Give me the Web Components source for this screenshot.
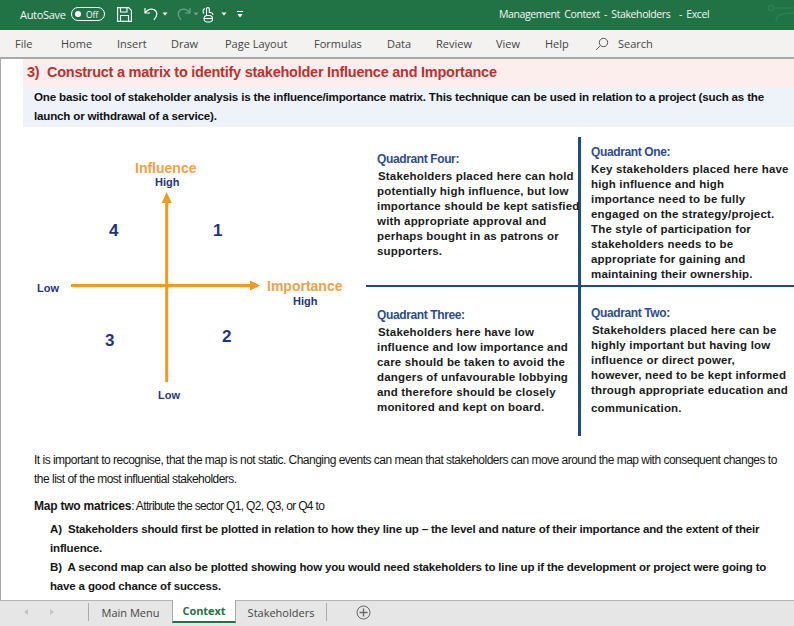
<!DOCTYPE html>
<html><head><meta charset="utf-8"><style>
html,body{margin:0;padding:0;background:#fff;overflow:hidden}
body{width:794px;height:626px;font-family:"Liberation Sans",Arial,sans-serif}
xl-window{width:794px;height:626px}
</style></head><body>
<xl-window>
  <xl-titlebar></xl-titlebar>
  <xl-menu></xl-menu>
  <xl-sheet>
    <xl-heading>3)&nbsp; Construct a matrix to identify stakeholder Influence and Importance</xl-heading>
    <xl-intro>One basic tool of stakeholder analysis is the influence/importance matrix. This technique can be used in relation to a project (such as the<br>launch or withdrawal of a service).</xl-intro>
    <xl-matrix>
      <xl-diagram slot="diagram"></xl-diagram>
      <xl-quad style="--pt:14px;--pl:11px;--br:3px;--bb:2px" title-text="Quadrant Four:"><span style="padding-left:1px">Stakeholders</span> placed here can hold<br>potentially high influence, but low<br>importance should be kept satisfied<br>with appropriate approval and<br>perhaps bought in as patrons or<br>supporters.</xl-quad>
      <xl-quad style="--pt:7px;--pl:10px;--bb:2px" title-text="Quadrant One:">Key stakeholders placed here have<br>high influence and high<br>importance need to be fully<br>engaged on the strategy/project.<br>The style of participation for<br>stakeholders needs to be<br>appropriate for gaining and<br>maintaining their ownership.</xl-quad>
      <xl-quad style="--pt:20px;--pl:11px;--br:3px" title-text="Quadrant Three:"><span style="padding-left:1px">Stakeholders</span> here have low<br>influence and low importance and<br>care should be taken to avoid the<br>dangers of unfavourable lobbying<br>and therefore should be closely<br>monitored and kept on board.</xl-quad>
      <xl-quad style="--pt:18px;--pl:10px" title-text="Quadrant Two:"><span style="padding-left:1px">Stakeholders</span> placed here can be<br>highly important but having low<br>influence or direct power,<br>however, need to be kept informed<br>through appropriate education and<br><span style="display:inline-block;margin-top:3px">communication.</span></xl-quad>
    </xl-matrix>
    <xl-notes></xl-notes>
  </xl-sheet>
  <xl-tabs></xl-tabs>
</xl-window>
<script>
function def(name, html){
  customElements.define(name, class extends HTMLElement{
    constructor(){super();const r=this.attachShadow({mode:'open'});r.innerHTML=typeof html==='function'?html(this):html;}
  });
}
def('xl-window',`<style>:host{display:flex;flex-direction:column;overflow:hidden;background:#fff}</style><slot></slot>`);
def('xl-titlebar',`<style>
:host{display:flex;align-items:center;height:30px;background:#217346;color:#fff;font:11px "Open Sans","Liberation Sans",sans-serif;flex:none;overflow:hidden;padding-bottom:2px;box-sizing:border-box}
.left{display:flex;align-items:center;width:499px;flex:none}
.auto{margin-left:20px;width:47px;color:#f4f8f5;letter-spacing:-.3px}
.tog{margin-left:4px;height:12px;border:1px solid #fff;border-radius:7px;display:flex;align-items:center;font-size:8.5px;gap:5px;padding-left:3px;box-sizing:content-box;width:29px}
.tog i{width:6px;height:6px;background:#fff;border-radius:50%}
svg{display:block;flex:none}
.title{font-size:10.5px;letter-spacing:-.4px;word-spacing:2px;white-space:pre;color:#f3f8f5}
.wm{margin-left:auto;margin-right:0}
</style>
<div class="left"><span class="auto">AutoSave</span><span class="tog"><i></i>Off</span>
<svg style="margin-left:12px" width="15" height="15" viewBox="0 0 15 15" fill="none" stroke="#fff" stroke-width="1.1"><path d="M.6.6h11l2.800 2.800v11H.6z"/><path d="M3.500.6v4.400h6.500V.6M3.500 14.400V8.500h8v5.900"/></svg>
<svg style="margin-left:12px" width="16" height="15" viewBox="0 0 16 15" fill="none" stroke="#fff" stroke-width="1.2"><path d="M1 1v5h5M1.300 5.800c2-3.600 6-4.600 9-3 3.400 2 3.400 6.500-.5 10"/></svg>
<svg style="margin-left:2px" width="6" height="4" viewBox="0 0 6 4"><path d="M.5.500h5L3 3.500z" fill="#fff"/></svg>
<svg style="margin-left:7px;opacity:.35" width="16" height="15" viewBox="0 0 16 15" fill="none" stroke="#fff" stroke-width="1.2"><path d="M15 1v5h-5M14.700 5.800c-2-3.600-6-4.600-9-3-3.400 2-3.400 6.500.5 10"/></svg>
<svg style="margin-left:2px;opacity:.35" width="6" height="4" viewBox="0 0 6 4"><path d="M.5.500h5L3 3.500z" fill="#fff"/></svg>
<svg style="margin-left:3px" width="12" height="17" viewBox="0 0 12 17" fill="none" stroke="#fff" stroke-width="1.1"><path d="M4.500 9V3a1.400 1.400 0 0 1 2.800 0v3.500h1.200a2.400 2.400 0 0 1 2.400 2.400M2 7.500a3 3 0 0 1 1-5"/><rect x="2" y="9.500" width="8.500" height="6.500" rx="3.200"/><path d="M2 12.500h8.500"/></svg>
<svg style="margin-left:7px" width="6" height="4" viewBox="0 0 6 4"><path d="M.5.500h5L3 3.500z" fill="#fff"/></svg>
<svg style="margin-left:10px" width="6" height="7" viewBox="0 0 6 7" fill="#fff"><path d="M0 0h6v1H0zM.5 3h5L3 6.500z"/></svg></div>
<span class="title">Management Context - Stakeholders  - Excel</span>
<svg class="wm" width="26" height="20" viewBox="0 0 26 20" fill="none" stroke="#2b7f50" stroke-width="1.6"><circle cx="3" cy="4" r="2.500"/><path d="M6 4h20M8 18c0-7 5-9 18-9"/></svg>`);
def('xl-menu',`<style>
:host{display:flex;align-items:center;height:29px;flex:none;background:#f3f2f1;color:#444;font:11px "Open Sans","Liberation Sans",sans-serif;border-bottom:2px solid #a9a9a9;box-sizing:border-box;padding-left:15px}
span{display:block;flex:none;white-space:nowrap}
svg{display:block;flex:none}
</style>
<span style="width:46px">File</span><span style="width:56px">Home</span><span style="width:54px">Insert</span><span style="width:54px">Draw</span><span style="width:89px">Page Layout</span><span style="width:73px">Formulas</span><span style="width:49px">Data</span><span style="width:60px">Review</span><span style="width:49px">View</span><span style="width:50px">Help</span>
<svg width="14" height="14" viewBox="0 0 14 14" fill="none" stroke="#555" stroke-width="1"><circle cx="8.500" cy="5.500" r="4.200"/><path d="M5.500 8.500L1 13"/></svg>
<span style="margin-left:9px">Search</span>`);
def('xl-sheet',`<style>:host{display:flex;flex-direction:column;flex:1;min-height:0;border-left:1px solid #a8a8a8;overflow:hidden}</style><slot></slot>`);
def('xl-heading',`<style>:host{display:block;height:28px;margin-left:22px;padding-left:4px;background:#fdeeee;color:#b9322e;font:bold 14.500px/27px "Liberation Sans",sans-serif;white-space:nowrap;letter-spacing:-.25px}</style><slot></slot>`);
def('xl-intro',`<style>:host{display:block;height:40px;margin-left:22px;padding:0 0 0 11px;background:#eef3fa;color:#111;font:bold 11.600px/19px "Liberation Sans",sans-serif;white-space:nowrap;letter-spacing:-.19px}</style><slot></slot>`);
def('xl-matrix',`<style>
:host{display:grid;grid-template-columns:365px 215px 213px;grid-template-rows:150px 149px;margin-top:10px;height:299px;flex:none}
.d{grid-row:1/3;grid-column:1}
</style><div class="d"><slot name="diagram"></slot></div><slot></slot>`);
def('xl-diagram',`<style>:host{display:block}svg{display:block}text{font-family:"Liberation Sans",sans-serif;font-weight:bold}</style>
<svg width="365" height="299" viewBox="0 0 365 299">
<g fill="#f39a1e">
<rect x="164.200" y="64" width="3" height="181"/><path d="M165.700 55l5 11h-10z"/>
<rect x="70" y="147" width="182" height="3"/><path d="M259 148.500l-10-5v10z"/>
</g>
<g fill="#eba24a" font-size="14"><text x="134" y="36">Influence</text><text x="266" y="153.500">Importance</text></g>
<g fill="#24357f" font-size="11"><text x="154" y="48.500">High</text><text x="292" y="168">High</text><text x="36" y="154.500">Low</text><text x="157" y="262">Low</text></g>
<g fill="#1f3480" font-size="17"><text x="108" y="99">4</text><text x="212" y="99">1</text><text x="104" y="209">3</text><text x="221" y="205">2</text></g>
</svg>`);
def('xl-quad',el=>`<style>
:host{display:block;box-sizing:border-box;padding:var(--pt) 0 0 var(--pl);border-right:var(--br,0) solid #1f4a85;border-bottom:var(--bb,0) solid #1f4a85;color:#1a1a1a;font:bold 11.500px/15px "Liberation Sans",sans-serif;letter-spacing:.18px;white-space:nowrap}
.t{color:#2c4d8b;font-size:12px;letter-spacing:-.38px;line-height:17px;margin-bottom:1px}
</style><div class="t">${el.getAttribute('title-text')}</div><slot></slot>`);
customElements.define('xl-notes',class extends HTMLElement{constructor(){super();this.attachShadow({mode:'open'}).innerHTML=`<style>
:host{display:block;padding:15px 0 0 33px;color:#161616;font:12px/19px "Liberation Sans",sans-serif;white-space:nowrap}
p{margin:0;letter-spacing:-.51px}
.m{margin-top:8px;letter-spacing:-.66px}
b{letter-spacing:-.22px}
ol{list-style:none;margin:4px 0 0 16px;padding:0;font:bold 11.500px/19px "Liberation Sans",sans-serif;letter-spacing:-.16px}
</style>
<p>It is important to recognise, that the map is not static. Changing events can mean that stakeholders can move around the map with consequent changes to<br>the list of the most influential stakeholders.</p>
<p class="m"><b>Map two matrices</b>: Attribute the sector Q1, Q2, Q3, or Q4 to</p>
<ol><li>A)&nbsp; Stakeholders should first be plotted in relation to how they line up – the level and nature of their importance and the extent of their<br>influence.</li>
<li>B)&nbsp; A second map can also be plotted showing how you would need stakeholders to line up if the development or project were going to<br>have a good chance of success.</li></ol>`}});
def('xl-tabs',`<style>
:host{display:flex;align-items:flex-start;height:26px;flex:none;background:#e6e6e6;border-top:1px solid #b5b5b5;box-sizing:border-box;color:#444;font:11px "Open Sans","Liberation Sans",sans-serif;margin-top:-1px;position:relative}
.nav{width:88px;height:22px;display:flex;align-items:center;gap:22px;padding-left:24px;box-sizing:border-box}
.s{width:1px;height:18px;background:#aaa;margin-top:2px}
.t{display:flex;align-items:center;justify-content:center;height:22px;flex:none}
.a{width:64px;background:#fff;color:#217346;font-weight:bold;border-bottom:2px solid #217346;border-left:1px solid #aaa;border-right:1px solid #aaa;margin-top:-1px;height:23px;box-sizing:border-box;letter-spacing:-.1px}
svg{display:block}
</style>
<div class="nav"><svg width="4" height="6"><path d="M4 0v6L0 3z" fill="#c4c4c4"/></svg><svg width="4" height="6"><path d="M0 0v6l4-3z" fill="#c4c4c4"/></svg></div>
<div class="s"></div><div class="t" style="width:83px">Main Menu</div><div class="t a">Context</div><div class="t" style="width:90px">Stakeholders</div><div class="s"></div>
<svg style="margin:4px 0 0 29px" width="15" height="15" viewBox="0 0 15 15" fill="none" stroke="#666"><circle cx="7.500" cy="7.500" r="6.500"/><path d="M7.500 3.500v8M3.500 7.500h8" stroke-width="1.300"/></svg>`);
</script>
</body></html>
